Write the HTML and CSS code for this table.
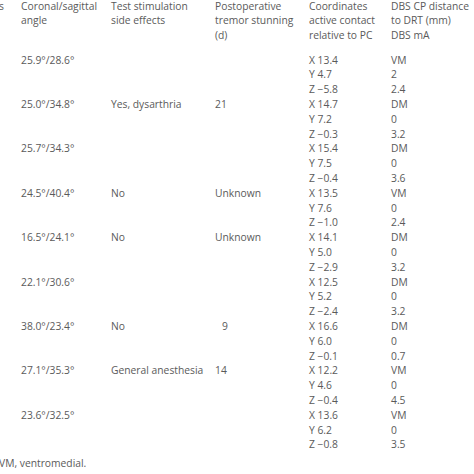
FILE: index.html
```html
<!DOCTYPE html>
<html>
<head>
<meta charset="utf-8">
<link rel="stylesheet" href="styles.css">
</head>
<body>
<div class="page">
  <div class="table">
    <div class="th">s</div>
    <div class="th">Coronal/sagittal<br>angle</div>
    <div class="th">Test stimulation<br>side effects</div>
    <div class="th">Postoperative<br>tremor stunning<br>(d)</div>
    <div class="th">Coordinates<br>active contact<br>relative to PC</div>
    <div class="th">DBS CP distance<br>to DRT (mm)<br>DBS mA</div>

    <div class="td"></div><div class="td">25.9°/28.6°</div><div class="td"></div><div class="td"></div>
    <div class="td">X 13.4<br>Y 4.7<br>Z −5.8</div><div class="td">VM<br>2<br>2.4</div>

    <div class="td"></div><div class="td">25.0°/34.8°</div><div class="td">Yes, dysarthria</div><div class="td">21</div>
    <div class="td">X 14.7<br>Y 7.2<br>Z −0.3</div><div class="td">DM<br>0<br>3.2</div>

    <div class="td"></div><div class="td">25.7°/34.3°</div><div class="td"></div><div class="td"></div>
    <div class="td">X 15.4<br>Y 7.5<br>Z −0.4</div><div class="td">DM<br>0<br>3.6</div>

    <div class="td"></div><div class="td">24.5°/40.4°</div><div class="td">No</div><div class="td">Unknown</div>
    <div class="td">X 13.5<br>Y 7.6<br>Z −1.0</div><div class="td">VM<br>0<br>2.4</div>

    <div class="td"></div><div class="td">16.5°/24.1°</div><div class="td">No</div><div class="td">Unknown</div>
    <div class="td">X 14.1<br>Y 5.0<br>Z −2.9</div><div class="td">DM<br>0<br>3.2</div>

    <div class="td"></div><div class="td">22.1°/30.6°</div><div class="td"></div><div class="td"></div>
    <div class="td">X 12.5<br>Y 5.2<br>Z −2.4</div><div class="td">DM<br>0<br>3.2</div>

    <div class="td"></div><div class="td">38.0°/23.4°</div><div class="td">No</div><div class="td indent">9</div>
    <div class="td">X 16.6<br>Y 6.0<br>Z −0.1</div><div class="td">DM<br>0<br>0.7</div>

    <div class="td"></div><div class="td">27.1°/35.3°</div><div class="td">General anesthesia</div><div class="td">14</div>
    <div class="td">X 12.2<br>Y 4.6<br>Z −0.4</div><div class="td">VM<br>0<br>4.5</div>

    <div class="td"></div><div class="td">23.6°/32.5°</div><div class="td"></div><div class="td"></div>
    <div class="td">X 13.6<br>Y 6.2<br>Z −0.8</div><div class="td">VM<br>0<br>3.5</div>
  </div>
  <p class="foot">VM, ventromedial.</p>
</div>
</body>
</html>
```

FILE: styles.css
```css
html, body {
  margin: 0;
  padding: 0;
  background: #ffffff;
}
body {
  width: 474px;
  height: 474px;
  overflow: hidden;
  font-family: "Open Sans", "Liberation Sans", sans-serif;
  font-size: 10.3px;
  line-height: 14.8px;
  color: #5a5a5a;
}
.page {
  margin-top: -1.4px;
}
.table {
  display: grid;
  grid-template-columns: 21px 90px 104px 94px 82px 1fr;
  grid-template-rows: 54px;
  grid-auto-rows: 44.4px;
}
.th {
  white-space: nowrap;
}
.table > .th:first-child {
  margin-left: -1px;
}
.td {
  white-space: nowrap;
}
.indent {
  padding-left: 7px;
}
.foot {
  margin: 4px 0 0 -1px;
}
```
